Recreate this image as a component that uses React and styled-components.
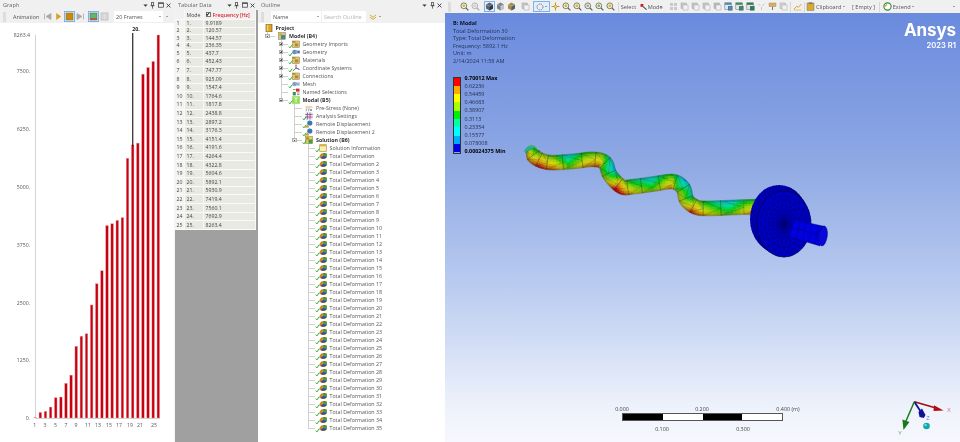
import React from "react";
import styled, { createGlobalStyle } from "styled-components";

const Global = createGlobalStyle`
  html, body { margin: 0; padding: 0; background: #f0f0f0; }
  * { box-sizing: border-box; }
`;
const FONT = `"Open Sans", "Noto Sans", "Liberation Sans", sans-serif`;

const Page = styled.div`
  width: 960px; height: 442px; overflow: hidden; filter: blur(0.28px);
  display: grid; grid-template-columns: 174px 84px 187px 515px;
  font-family: ${FONT}; font-size: 5.4px; color: #333; background: #f4f4f4;
`;
const Panel = styled.section`display: flex; flex-direction: column; min-width: 0; height: 442px; overflow: hidden;`;
const TitleBar = styled.div`
  height: 10px; flex: none; display: flex; align-items: center; gap: 2px;
  padding: 0 3px 0 ${p => p.$pl || 3}px; color: #666; font-size: 5.6px; background: #f0f0f0; white-space: nowrap;
`;
const Dots = styled.span`
  flex: 1; height: 3px; margin: 0 2px;
  background-image: radial-gradient(#c6c6c6 0.45px, transparent 0.55px); background-size: 2px 1.5px;
`;
const WinIcons = styled.span`display: flex; gap: 2.5px; align-items: center; color: #444;`;
const Toolbar = styled.div`
  height: 13px; flex: none; display: flex; align-items: center;
  background: #f0f0f0; white-space: nowrap; color: #555; font-size: ${p => p.$fs || 5.5}px;
  padding-left: ${p => p.$pad || 3}px; gap: ${p => p.$gap ?? 1.5}px;
`;
const Grip = styled.span`
  width: 3px; height: 10px; flex: none;
  background-image: radial-gradient(#bdbdbd 0.5px, transparent 0.6px); background-size: 1.6px 1.6px;
`;
const ToolBtn = styled.span`
  width: ${p => p.$w || 11}px; height: 11px; flex: none; display: inline-flex; align-items: center; justify-content: center;
  border: 0.7px solid ${p => (p.$active ? "#7fb2ea" : "transparent")};
  background: ${p => (p.$active ? "#e4eefa" : "transparent")};
`;
const Label = styled.span`flex: none; width: ${p => (p.$w ? p.$w + "px" : "auto")}; color: ${p => p.$c || "#555"}; text-align: ${p => p.$align || "left"};`;
const Select = styled.span`
  width: ${p => p.$w}px; height: 10.5px; flex: none; display: flex; align-items: center; justify-content: space-between;
  background: #fff; padding: 0 2.5px 0 2px; color: ${p => p.$c || "#555"}; margin-left: ${p => p.$ml || 0}px;
`;
const Sep = styled.span`width: 0.7px; height: 10px; background: #d6d6d6; flex: none; margin: 0 ${p => p.$m ?? 1}px;`;
const Spacer = styled.span`width: ${p => p.$w}px; flex: none;`;
const Caret = styled.span`
  width: 0; height: 0; flex: none; border-left: 1.6px solid transparent; border-right: 1.6px solid transparent;
  border-top: 1.8px solid #555; margin-left: 1px;
`;

/* ---------- Graph ---------- */
const ChartArea = styled.div`flex: 1; background: #fff; min-height: 0;`;
const freq = ["9.9189","120.57","144.57","236.35","437.7","452.43","747.77","925.09","1547.4","1764.6","1817.8","2438.8","2897.2","3176.3","4151.4","4191.6","4264.4","4322.8","5604.6","5892.1","5930.9","7419.4","7560.1","7692.9","8263.4"];
const yOf = v => 418 - (v / 8263.4) * 383;

function Chart() {
  const ticks = [["8263.4", 35], ["7500.", 71], ["6250.", 129], ["5000.", 187], ["3750.", 245], ["2500.", 303], ["1250.", 360], ["0.", 418]];
  const xl = [[1,34.7],[3,45],[5,55.5],[7,66],[9,76],[11,88],[13,98],[15,109],[17,119],[19,130],[21,140],[25,154]];
  return (
    <svg width="174" height="419" viewBox="0 23 174 419" style={{ display: "block" }} fontFamily={FONT} fontSize="5.2" fill="#555">
      <path d="M35.5 35V418.5H160" fill="none" stroke="#d4d4d4" />
      {ticks.map(([t, y]) => <text key={t} x="30" y={y + 2} textAnchor="end">{t}</text>)}
      {xl.map(([t, x]) => <text key={t} x={x} y="427" textAnchor="middle">{t}</text>)}
      {freq.map((f, i) => {
        const x = 35.2 + i * 5.13, y = yOf(parseFloat(f));
        return <rect key={f} x={x - 1.3} y={y} width="2.6" height={418 - y} fill="#c8000f" stroke="#eaa9ad" strokeWidth="0.4" />;
      })}
      <rect x="132.2" y="33" width="1.1" height="113" fill="#111" />
      <text x="136" y="31" textAnchor="middle" fontWeight="700" fill="#222">20.</text>
    </svg>
  );
}

/* ---------- Tabular ---------- */
const TableWrap = styled.div`flex: 1; background: #a0a0a0; margin-left: 1px; padding-right: 2px; min-height: 0; display:flex; flex-direction:column;`;
const Row = styled.div`
  display: grid; grid-template-columns: 10px 19px 1fr; height: ${p => p.$h}px; flex: none;
  line-height: ${p => p.$h}px; background: #e9e9e3; font-size: 5.2px; color: #444;
`;
const Cell = styled.span`
  display: flex; align-items: center; padding-left: 1.5px; overflow: hidden; white-space: nowrap; height: 100%;
  border-right: 0.6px solid #f8f8f6; border-bottom: 0.6px solid #fafaf8;
  background: ${p => p.$bg || "transparent"}; color: ${p => p.$c || "inherit"}; font-weight: ${p => p.$w || 400};
`;
const CheckBox = styled.span`
  width: 5px; height: 5px; flex: none; border: 0.6px solid #777; background: #fff; margin-right: 2px;
  display: inline-flex; align-items: center; justify-content: center; color: #111; font-size: 4.5px; line-height: 1;
`;

/* ---------- Outline ---------- */
const Tree = styled.div`flex: 1; background: #fff; padding-top: 0.7px; min-height: 0;`;
const TreeRow = styled.div`
  height: 8px; display: flex; align-items: center; padding-left: 3px; white-space: nowrap;
  color: ${p => (p.$bold ? "#333" : "#555")}; font-weight: ${p => (p.$bold ? 700 : 400)}; font-size: 5.3px;
`;
const Slot = styled.span`width: 13.5px; height: 8px; flex: none;`;
const Connector = styled.span`
  width: 13.5px; height: 8px; flex: none; position: relative; 
  &::before { content: ""; position: absolute; left: 6.4px; top: 0; width: 0.6px; background: #cfcfcf; height: ${p => (p.$end ? 4 : 8)}px; }
  &::after { content: ""; position: absolute; left: 6.8px; top: 4px; height: 0.6px; width: 7px; background: #cfcfcf; }
`;
const Expander = styled.span`
  position: absolute; z-index: 1; left: 4.3px; top: 1.9px; width: 4.6px; height: 4.6px; background: #e4e4e4; border: 0.5px solid #b0b0b0;
  &::before { content: ""; position: absolute; left: 0.6px; right: 0.6px; top: 1.5px; height: 0.6px; background: #555; }
  ${p => p.$plus && `&::after { content: ""; position: absolute; top: 0.6px; bottom: 0.6px; left: 1.5px; width: 0.6px; background: #555; }`}
`;
const IconSlot = styled.span`width: 13.5px; height: 8px; flex: none; position: relative; display: flex; align-items: center; justify-content: center; padding-left: 2px;`;
const CheckMark = styled.svg`position: absolute; left: 0; bottom: -0.8px; width: 5px; height: 4.5px;`;
const TreeText = styled.span`margin-left: 1px;`;

function TreeIcon({ kind }) {
  const P = {
    project: <><rect x="1" y="0" width="6" height="8" fill="#d9a52a" stroke="#6b4b10" strokeWidth=".6" /><rect x="1.8" y="0.8" width="1.4" height="6.4" fill="#f2d27a" /></>,
    model: <><rect x="0.5" y="0.5" width="7" height="7" fill="#d8c77a" stroke="#7f7a50" strokeWidth=".5" /><rect x="3" y="3" width="4" height="4" fill="#3f8aa0" /><circle cx="2.6" cy="2.5" r="1.3" fill="#e3a02a" /></>,
    folder: <><rect x="0.5" y="1" width="7" height="6.5" fill="#dcc886" stroke="#8a7a3a" strokeWidth=".5" /><rect x="2.8" y="3.4" width="3.5" height="3" fill="#b98a24" /><rect x="0.5" y="1" width="3" height="1.6" fill="#b98a24" /></>,
    geometry: <><ellipse cx="2.6" cy="4" rx="2.4" ry="2.2" fill="#5f8fc4" /><rect x="3.6" y="2.4" width="4.2" height="3.2" fill="#87a9d0" /><rect x="5.4" y="3.3" width="2.4" height="1.3" fill="#34608f" /></>,
    coords: <><path d="M4 4V.5" stroke="#cf2a2a" strokeWidth="1" fill="none" /><path d="M4 4L.8 7" stroke="#2d9a3a" strokeWidth="1" /><path d="M4 4l3.5 1.5" stroke="#2b55c8" strokeWidth="1" /></>,
    mesh: <><ellipse cx="2.6" cy="4" rx="2.4" ry="2.2" fill="#8aa9cc" /><rect x="3.6" y="2.4" width="4.2" height="3.2" fill="#a9c0da" /><path d="M1 3l3 2M4 3l3 2" stroke="#48688d" strokeWidth=".4" /></>,
    named: <><rect x="4" y="0.6" width="3.5" height="3" fill="#cc3030" /><rect x="0.8" y="4" width="3" height="3.4" fill="#3f8f4a" /><path d="M1 1.5h2.6M5 5h2.5M5 6.6h2.5" stroke="#666" strokeWidth=".7" /></>,
    modal: <><rect x="0.2" y="0.2" width="7.6" height="7.6" fill="#8edb5e" /><path d="M4 1.5v5M2 2h4" stroke="#f2f7c8" strokeWidth="1.1" /></>,
    prestress: <><path d="M.5 3h7" stroke="#d8a83a" strokeWidth=".9" /><path d="M1 7.3l1-3M3.5 7.3l.6-3" stroke="#55606a" strokeWidth=".6" /><path d="M5 5l2 2M7 5l-2 2" stroke="#3e5f9e" strokeWidth=".6" /></>,
    analysis: <><rect x="0.3" y="0.5" width="7.4" height="7" fill="#e7e4f2" /><path d="M.3 2.5h7.4M.3 5h7.4" stroke="#c44" strokeWidth=".8" /><path d="M2.4.5v7M5 .5v7" stroke="#5a50b8" strokeWidth=".8" /></>,
    remote: <><circle cx="4.8" cy="3" r="2.6" fill="#3b74b8" /><path d="M.6 7.2L4 4" stroke="#777" strokeWidth=".8" /><rect x="0.5" y="5.7" width="3.4" height="2" fill="#d9a52a" /></>,
    solution: <><rect x="0.5" y="0.5" width="7" height="7" fill="#d6cf6e" stroke="#8a7f35" strokeWidth=".5" /><rect x="3.5" y="3.5" width="4" height="4" fill="#4d9a3f" /><circle cx="2.5" cy="2.5" r="1.4" fill="#d1851c" /></>,
    info: <><rect x="0.7" y="0.7" width="6.6" height="6.6" fill="#fbf0b4" stroke="#9f8b3c" strokeWidth=".6" /><rect x="0.7" y="0.7" width="6.6" height="1.7" fill="#d9b43e" /></>,
    td: <><path d="M1 3.2C2 1 5 .6 7.6 1.6L7.8 5.4C6 7.4 2.4 7.4.4 5.6Z" fill="#d4841e" /><path d="M4 1.2C5.5.8 7 1 7.8 1.8L7.8 4.8 4.6 4Z" fill="#3f9f3f" /><path d="M1.5 5.4L4.6 4 7.8 4.8C6.5 7 3 7.4 1.5 5.4Z" fill="#2f4fb0" /></>,
  };
  return <svg width="8" height="8" viewBox="0 0 8 8" style={{ display: "block" }}>{P[kind]}</svg>;
}

const rows = [
  { t: "Project", d: 0, i: "project", bold: true },
  { t: "Model (B4)", d: 1, i: "model", bold: true, box: "minus", end: true, c: false },
  { t: "Geometry Imports", d: 2, i: "folder", box: "plus" },
  { t: "Geometry", d: 2, i: "geometry", box: "plus" },
  { t: "Materials", d: 2, i: "folder", box: "plus" },
  { t: "Coordinate Systems", d: 2, i: "coords", box: "plus" },
  { t: "Connections", d: 2, i: "folder", box: "plus" },
  { t: "Mesh", d: 2, i: "mesh" },
  { t: "Named Selections", d: 2, i: "named", c: false },
  { t: "Modal (B5)", d: 2, i: "modal", bold: true, box: "minus", end: true },
  { t: "Pre-Stress (None)", d: 3, i: "prestress", c: false },
  { t: "Analysis Settings", d: 3, i: "analysis" },
  { t: "Remote Displacement", d: 3, i: "remote" },
  { t: "Remote Displacement 2", d: 3, i: "remote" },
  { t: "Solution (B6)", d: 3, i: "solution", bold: true, box: "minus", end: true },
  { t: "Solution Information", d: 4, i: "info" },
  ...Array.from({ length: 35 }, (_, k) => ({ t: k ? `Total Deformation ${k + 1}` : "Total Deformation", d: 4, i: "td", end: k === 34 })),
];

/* ---------- Toolbar glyphs ---------- */
const Mag = ({ c = "#d8b23a", g }) => (
  <svg width="9" height="9" viewBox="0 0 9 9"><circle cx="3.8" cy="3.8" r="2.9" fill={g ? "#e9e9e9" : "#f5eec8"} stroke={g ? "#a8a8a8" : "#5d6a5d"} strokeWidth=".8" /><circle cx="3.8" cy="3.8" r="1.3" fill={g ? "#cfcfcf" : c} /><path d="M6 6l2.4 2.4" stroke={g ? "#a8a8a8" : "#55606a"} strokeWidth="1.1" /></svg>
);
const Cube = ({ c = "#5a6470", d = "#2f3640" }) => (
  <svg width="9" height="9" viewBox="0 0 9 9"><path d="M4.5 .6L8 2.4v4.2L4.5 8.4 1 6.6V2.4Z" fill={c} /><path d="M4.5 4.2L8 2.4v4.2L4.5 8.4Z" fill={d} /><path d="M1 2.4l3.5 1.8L8 2.4" stroke="#ddd" strokeWidth=".4" fill="none" /></svg>
);
const Sheets = ({ c = "#c9c9c9", b = "#a5a5a5" }) => (
  <svg width="9" height="9" viewBox="0 0 9 9"><rect x="1" y="1" width="5.5" height="5.5" fill={c} stroke={b} strokeWidth=".5" /><rect x="3" y="3" width="5" height="5" fill="#f2f2f2" stroke={b} strokeWidth=".5" /></svg>
);
const Pane = ({ c }) => (
  <svg width="9" height="9" viewBox="0 0 9 9"><rect x=".8" y=".8" width="6.5" height="6.5" fill="#dfe6ea" stroke="#60707a" strokeWidth=".5" /><rect x=".8" y=".8" width="6.5" height="2" fill={c} /><rect x="4.2" y="4.2" width="4" height="4" fill={c} stroke="#40505a" strokeWidth=".4" /></svg>
);
const WinBar = ({ three }) => (
  <WinIcons>
    <svg width="5" height="5" viewBox="0 0 5 5"><path d="M.4 1.4h4.2L2.5 3.8Z" fill="#333" /></svg>
    <svg width="5" height="7" viewBox="0 0 5 7"><path d="M1.2.5h2.6M1.5.5v3h2v-3M.5 3.7h4M2.5 3.7V6.6" stroke="#333" strokeWidth=".7" fill="none" /></svg>
    {!three && <svg width="6" height="6" viewBox="0 0 6 6"><rect x=".5" y=".8" width="5" height="4.4" fill="none" stroke="#333" strokeWidth=".7" /><path d="M.5 1.4h5" stroke="#333" strokeWidth=".8" /></svg>}
    <svg width="5" height="5" viewBox="0 0 5 5"><path d="M.6.6l3.8 3.8M4.4.6L.6 4.4" stroke="#333" strokeWidth=".9" /></svg>
  </WinIcons>
);

/* ---------- Viewport ---------- */
const Viewport = styled.section`display: flex; flex-direction: column; height: 442px;`;
const Canvas = styled.div`
  flex: 1; position: relative; overflow: hidden;
  background: linear-gradient(180deg, #6a8ade 0%, #8fa9e4 35%, #bccdf0 65%, #eef2fb 92%, #f6f8fd 100%);
`;
const Info = styled.div`position: absolute; left: 8px; top: 7px; color: #15233f; font-size: 5.5px; line-height: 7.55px; opacity: .88; white-space: nowrap;`;
const InfoTitle = styled.div`font-weight: 700; color: #000;`;
const Legend = styled.div`position: absolute; left: 7.5px; top: 62.5px; display: grid; grid-template-columns: 8px auto; column-gap: 4px; font-size: 5.4px; color: #1c2740;`;
const Swatches = styled.div`display: flex; flex-direction: column; height: 77px; border: 0.7px solid #333; margin-top: 1px;`;
const Swatch = styled.span`flex: 1; background: ${p => p.$c};`;
const LegendLabels = styled.div`display: flex; flex-direction: column; justify-content: space-between; height: 82px; margin-top: -2px; line-height: 8.2px; white-space: nowrap;`;
const LegendLabel = styled.span`font-weight: ${p => (p.$b ? 700 : 400)}; color: ${p => (p.$b ? "#000" : "#24304d")};`;
const Brand = styled.div`position: absolute; right: 4px; top: 8px; color: #fff; text-align: right; font-family: Inter, "Open Sans", sans-serif; font-weight: 700; display: flex; flex-direction: column; gap: 2px;`;
const BrandName = styled.div`font-size: 17px; line-height: 18px; letter-spacing: -0.1px;`;
const BrandVer = styled.div`font-size: 7.6px; line-height: 9px; font-weight: 600;`;
const Scene = styled.svg`position: absolute; inset: 0; display: block;`;
const ScaleBar = styled.div`
  position: absolute; left: 177px; top: 399.5px; width: 161px; height: 8px; display: flex; border: 0.8px solid #555; background: #fff;
`;
const ScaleSeg = styled.span`flex: 1; background: ${p => (p.$on ? "#000" : "#fff")};`;
const ScaleNum = styled.span`position: absolute; top: ${p => p.$t}px; left: ${p => p.$x}px; transform: translateX(-50%); font-size: 5.4px; color: #444; white-space: nowrap;`;

/* crank mesh */
const BANDS = [[0,0,230],[0,150,255],[0,255,255],[0,255,170],[0,240,0],[170,245,0],[255,255,0],[255,170,0],[255,0,0]];
const ramp = v => {
  const t = Math.max(0, Math.min(0.999, v)) * 8, i = Math.floor(t), f = t - i;
  return BANDS[i].map((c, k) => c + (BANDS[i + 1][k] - c) * f);
};
const Z = (x, y) => [510 + x / 3, 130 + y / 3];
const ctrl = [[62,60],[72,78],[95,92],[130,98],[200,93],[250,88],[285,98],[300,135],[335,170],[370,170],[430,162],[490,155],[520,175],[530,210],[560,232],[600,235],[680,232],[745,230]].map(p => Z(p[0], p[1]));
const spline = (() => {
  const out = [];
  for (let i = 0; i < ctrl.length - 1; i++) {
    const a = ctrl[Math.max(0, i - 1)], b = ctrl[i], c = ctrl[i + 1], d = ctrl[Math.min(ctrl.length - 1, i + 2)];
    for (let k = 0; k < 7; k++) {
      const t = k / 7, t2 = t * t, t3 = t2 * t;
      out.push([0, 1].map(j => 0.5 * (2 * b[j] + (c[j] - a[j]) * t + (2 * a[j] - 5 * b[j] + 4 * c[j] - d[j]) * t2 + (3 * b[j] - a[j] - 3 * c[j] + d[j]) * t3)));
    }
  }
  out.push(ctrl[ctrl.length - 1]);
  return out;
})();
const stops = [[40,.5],[90,.82],[130,.72],[170,.42],[220,.68],[270,.76],[292,.38],[325,.88],[370,.58],[420,.42],[480,.72],[510,.36],[550,.8],[600,.56],[650,.38],[700,.62],[745,.72]];
const base = zx => {
  for (let i = 0; i < stops.length - 1; i++) if (zx <= stops[i + 1][0]) {
    const [a, va] = stops[i], [b, vb] = stops[i + 1];
    return va + (vb - va) * Math.max(0, (zx - a) / (b - a));
  }
  return .6;
};
const frames = spline.map((p, i) => {
  const a = spline[Math.max(0, i - 1)], b = spline[Math.min(spline.length - 1, i + 1)];
  const dx = b[0] - a[0], dy = b[1] - a[1], l = Math.hypot(dx, dy) || 1;
  const r = i < 6 ? 4.2 + i * 0.5 : 7.4;
  return { p, n: [-dy / l, dx / l], r };
});
const at = (f, u) => [f.p[0] + f.n[0] * f.r * u, f.p[1] + f.n[1] * f.r * u];
const pt = a => `${a[0].toFixed(2)},${a[1].toFixed(2)}`;
const tube = (() => {
  const polys = [], US = [-1, -.72, -.4, -.1, .2, .5, .78, 1];
  for (let i = 0; i < frames.length - 1; i++) for (let j = 0; j < US.length - 1; j++) {
    const u = (US[j] + US[j + 1]) / 2, zx = (frames[i].p[0] - 510) * 3;
    const rgb = ramp(base(zx) + u * 0.2);
    const sh = 0.86 - 0.28 * Math.pow(Math.abs(u), 2.2);
    polys.push({ d: [at(frames[i], US[j]), at(frames[i + 1], US[j]), at(frames[i + 1], US[j + 1]), at(frames[i], US[j + 1])].map(pt).join(" "), f: `rgb(${rgb.map(c => Math.round(c * sh)).join(",")})` });
  }
  return polys;
})();
const tubeMesh = (() => {
  let d = "";
  for (let i = 0; i + 6 < frames.length; i += 6) {
    const a = frames[i], b = frames[i + 6];
    d += `M${pt(at(a, -1))}L${pt(at(a, 1))}M${pt(at(a, -1))}L${pt(at(b, .05))}L${pt(at(a, 1))}M${pt(at(b, -1))}L${pt(at(b, .05))}L${pt(at(b, 1))}`;
  }
  return d;
})();
const outlinePath = (u) => frames.map((f, i) => (i ? "L" : "M") + pt(at(f, u))).join("");
const discMesh = (cx, cy, rx, ry, rings, n) => {
  let d = "";
  const P = (r, a) => `${(cx + Math.cos(a) * rx * r).toFixed(1)} ${(cy + Math.sin(a) * ry * r).toFixed(1)}`;
  for (let r = 1; r <= rings; r++) {
    const R = r / rings, R2 = (r - 1) / rings;
    for (let k = 0; k < n; k++) {
      const a = (k + (r % 2) * .5) / n * 6.283, b = (k + 1 + (r % 2) * .5) / n * 6.283, m = (k + .5 + (r % 2) * .5) / n * 6.283;
      d += `M${P(R, a)}L${P(R, b)}L${P(R2, m)}Z`;
    }
  }
  return d;
};
const rimMesh = (() => {
  let d = "";
  for (let k = 0; k < 60; k++) {
    const a = k / 60 * 6.283, x = Math.cos(a), y = Math.sin(a);
    d += `M${(779 + 29 * x).toFixed(1)} ${(219 + 34 * y).toFixed(1)}L${(784 + 27 * x).toFixed(1)} ${(224 + 33 * y).toFixed(1)}`;
  }
  return d;
})();

function Scene3D() {
  return (
    <Scene width="515" height="429" viewBox="445 13 515 429">
      <circle cx={frames[0].p[0] + 1} cy={frames[0].p[1] + 1} r="6" fill="#4fae63" />
      <path d="M524 151a7 6 0 0 1 10-4l-1 5-7 2Z" fill="#22ad9c" />
      {tube.map((p, i) => <polygon key={i} points={p.d} fill={p.f} stroke={p.f} strokeWidth=".25" />)}
      <path d={tubeMesh} fill="none" stroke="#1c2a14" strokeWidth=".34" strokeOpacity=".6" />
      <path d={outlinePath(-1) + outlinePath(1)} fill="none" stroke="#26302a" strokeWidth=".4" strokeOpacity=".5" />
      <ellipse cx="779" cy="219" rx="29" ry="34" fill="#0000b8" />
      <path d={rimMesh} stroke="#000058" strokeWidth=".55" fill="none" />
      <ellipse cx="784" cy="224" rx="27" ry="33" fill="#0000cc" stroke="#000058" strokeWidth=".5" />
      <path d={discMesh(784, 224, 27, 33, 7, 22)} fill="none" stroke="#000060" strokeWidth=".42" />
      <path d="M795 220L825 226.5 820 246 790 237Z" fill="#0000e0" />
      <path d="M795 220L825 226.5M790 237L820 246M800 221l-3 17M806 222.5l-3 17.5M812 224l-3 18M818 225l-3 19M795 228l26 8" stroke="#000060" strokeWidth=".4" fill="none" />
      <ellipse cx="823" cy="236" rx="4.3" ry="10" transform="rotate(8 823 236)" fill="#0808d8" stroke="#000060" strokeWidth=".4" />
      {/* triad */}
      <path d="M914.3 401.7L936 408" stroke="#9c0f0f" strokeWidth="1.5" />
      <path d="M934 405.2L943.5 410.4 933.5 411Z" fill="#b50d0d" />
      <path d="M914.3 401.7L921 412" stroke="#10109a" strokeWidth="1.8" />
      <path d="M918.5 412l3.5-3.5 3.5 6.5-1.7 3-4.3-1Z" fill="#10109a" />
      <path d="M914.3 401.7L906 421" stroke="#1b7a1b" strokeWidth="1.5" />
      <path d="M902.4 419.6L909.4 422 903.5 430Z" fill="#177a17" />
      <circle cx="926.5" cy="426" r="3.3" fill="#10a7ad" />
      <circle cx="925.6" cy="425" r="1.2" fill="#62dfe0" />
      <text x="949" y="411.5" fontSize="6" fill="#e56a6a" textAnchor="middle" fontFamily={FONT}>X</text>
      <text x="928" y="420" fontSize="6" fill="#6a6aee" textAnchor="middle" fontFamily={FONT}>Z</text>
      <text x="900" y="434.5" fontSize="6" fill="#60b060" textAnchor="middle" fontFamily={FONT}>Y</text>
    </Scene>
  );
}

const legendColors = ["#ff0000","#ffaa00","#ffff00","#aaff00","#00f000","#00ffaa","#00ffff","#00aaff","#0000e6"];
const legendVals = [["0.70012 Max",1],["0.62236"],["0.54459"],["0.46683"],["0.38907"],["0.3113"],["0.23354"],["0.15577"],["0.078008"],["0.00024375 Min",1]];

export default function App() {
  return (
    <Page>
      <Global />
      <Panel>
        <TitleBar>Graph<Dots /><WinBar /></TitleBar>
        <Toolbar $gap={0}>
          <Grip /><Spacer $w={7} /><Label $w={28}>Animation</Label><Spacer $w={1} />
          <ToolBtn><svg width="9" height="9" viewBox="0 0 9 9"><path d="M1.5 1.5v6M8 1.5v6L3 4.5Z" stroke="#aaa" strokeWidth=".8" fill="#aaa" /></svg></ToolBtn>
          <ToolBtn><svg width="9" height="9" viewBox="0 0 9 9"><path d="M2.2 1l5 3.5-5 3.5Z" fill="#d9a21e" /></svg></ToolBtn>
          <ToolBtn $active><svg width="9" height="9" viewBox="0 0 9 9"><rect x="1" y="1" width="7" height="7" fill="#c68c12" stroke="#8a6510" strokeWidth=".5" /></svg></ToolBtn>
          <ToolBtn><svg width="9" height="9" viewBox="0 0 9 9"><path d="M7.5 1.5v6M1 1.5v6l5-3Z" stroke="#aaa" strokeWidth=".8" fill="#aaa" /></svg></ToolBtn>
          <Spacer $w={2} />
          <ToolBtn $active><svg width="9" height="9" viewBox="0 0 9 9"><rect x="1" y="1" width="7" height="7" fill="#5fb86a" stroke="#555" strokeWidth=".5" /><path d="M1 7h7" stroke="#d33" strokeWidth="1.3" /></svg></ToolBtn>
          <ToolBtn><svg width="9" height="9" viewBox="0 0 9 9"><rect x="1" y="1" width="7" height="7" fill="#e2e2e2" stroke="#aaa" strokeWidth=".6" /><path d="M3 1v7M6 1v7" stroke="#c4c4c4" strokeWidth=".6" /></svg></ToolBtn>
          <Select $w={49} $ml={4}>20 Frames<Caret /></Select>
          <Spacer $w={2} /><Caret />
        </Toolbar>
        <ChartArea><Chart /></ChartArea>
      </Panel>

      <Panel>
        <TitleBar $pl={4}>Tabular Data<Dots /><WinBar /></TitleBar>
        <TableWrap>
          <Row $h={10}>
            <Cell $bg="#f1f1f1" />
            <Cell $bg="#f1f1f1">Mode</Cell>
            <Cell $bg="#f1f1f1" $c="#d8232a" $w={600}><CheckBox>✔</CheckBox>Frequency [Hz]</Cell>
          </Row>
          {freq.map((f, i) => (
            <Row key={f} $h={i < 5 ? 7.6 : 8.6}>
              <Cell $bg="#f3f3f1">{i + 1}</Cell>
              <Cell>{i + 1}.</Cell>
              <Cell>{f}</Cell>
            </Row>
          ))}
        </TableWrap>
      </Panel>

      <Panel>
        <TitleBar>Outline<Dots /><WinBar three /></TitleBar>
        <Toolbar $gap={0}>
          <Grip /><Spacer $w={7} />
          <Select $w={50}>Name<Caret /></Select>
          <Spacer $w={1} />
          <Select $w={44} $c="#b5b5b5">Search Outline</Select>
          <Spacer $w={3} />
          <svg width="8" height="6" viewBox="0 0 8 6"><path d="M1 1l3 2.2L7 1M1 3.2l3 2.2 3-2.2" stroke="#d8a21e" strokeWidth=".9" fill="none" /></svg>
          <Spacer $w={1} /><Caret />
        </Toolbar>
        <Tree>
          {rows.map(r => (
            <TreeRow key={r.t} $bold={r.bold}>
              {Array.from({ length: Math.max(0, r.d - 1) }, (_, k) => <Slot key={k} />)}
              {r.d > 0 && <Connector $end={r.end}>{r.box && <Expander $plus={r.box === "plus"} />}</Connector>}
              <IconSlot>
                <TreeIcon kind={r.i} />
                {r.d > 0 && r.c !== false && <CheckMark viewBox="0 0 5 5"><path d="M.6 2.8l1.3 1.5L4.4.8" stroke="#13a313" strokeWidth="1" fill="none" /></CheckMark>}
              </IconSlot>
              <TreeText>{r.t}</TreeText>
            </TreeRow>
          ))}
        </Tree>
      </Panel>

      <Viewport>
        <Toolbar $pad={3} $gap={0} $fs={5.6}>
          <Grip /><Spacer $w={8} />
          <ToolBtn><Mag /></ToolBtn><ToolBtn><Mag g /></ToolBtn><Spacer $w={3} />
          <ToolBtn $active><Cube /></ToolBtn><ToolBtn><Cube c="#7a828c" d="#c2c6cb" /></ToolBtn><ToolBtn><Cube c="#a88a4a" d="#55606a" /></ToolBtn><Spacer $w={3} />
          <ToolBtn><Sheets /></ToolBtn><Spacer $w={2} />
          <ToolBtn $w={17} $active><svg width="8" height="8" viewBox="0 0 8 8"><circle cx="4" cy="4" r="3" fill="none" stroke="#555" strokeWidth=".7" strokeDasharray="1.4 .7" /></svg><Caret /></ToolBtn>
          <ToolBtn><svg width="9" height="9" viewBox="0 0 9 9"><path d="M4.5.5v8M.5 4.5h8" stroke="#c89b22" strokeWidth="1.1" /><circle cx="4.5" cy="4.5" r="1.4" fill="#f5e08a" stroke="#7a6a2a" strokeWidth=".4" /></svg></ToolBtn>
          <ToolBtn><Mag /></ToolBtn><ToolBtn><Mag /></ToolBtn><ToolBtn><Mag c="#9aa3ad" /></ToolBtn><ToolBtn><Mag c="#74b060" /></ToolBtn><ToolBtn><Mag /></ToolBtn>
          <Sep $m={2} />
          <Label $w={18}>Select</Label>
          <ToolBtn $w={9}><svg width="8" height="8" viewBox="0 0 8 8"><rect x=".6" y=".6" width="3.2" height="3.2" fill="#d01818" /><path d="M3.5 3.5L7.5 7" stroke="#444" strokeWidth="1.2" /></svg></ToolBtn>
          <Label $w={11}>Mode</Label><Caret />
          <Spacer $w={6} />
          <ToolBtn><svg width="9" height="9" viewBox="0 0 9 9"><path d="M1 1h3v3H1ZM5 1h3v3H5ZM1 5h3v3H1ZM5 5h3v3H5Z" fill="#c9c9c9" /></svg></ToolBtn>
          <ToolBtn><Sheets /></ToolBtn><ToolBtn><Sheets /></ToolBtn><ToolBtn><Sheets /></ToolBtn>
          <ToolBtn><Sheets c="#bbb" /></ToolBtn>
          <ToolBtn><Pane c="#4a8ab8" /></ToolBtn><ToolBtn><Pane c="#3d8a5a" /></ToolBtn><ToolBtn><Pane c="#2f7a50" /></ToolBtn>
          <ToolBtn><svg width="9" height="9" viewBox="0 0 9 9"><path d="M1.5 2l2 2M7.5 1.5l-2 2.5M4.5 5v3" stroke="#c4c4c4" strokeWidth="1" /></svg></ToolBtn>
          <ToolBtn><svg width="9" height="9" viewBox="0 0 9 9"><rect x="1" y="1" width="7" height="3.6" fill="#d8b05a" stroke="#888" strokeWidth=".4" /><path d="M4.5 4.6V8" stroke="#777" strokeWidth="1" /></svg></ToolBtn>
          <ToolBtn><Sheets c="#d4d4d4" /></ToolBtn>
          <Sep $m={1.5} />
          <ToolBtn><svg width="9" height="9" viewBox="0 0 9 9"><path d="M.8 7.2l3-3 1.6 1.2L8.4 2" stroke="#d8a21e" strokeWidth=".9" fill="none" /><path d="M.8 8h7.6" stroke="#c4a24a" strokeWidth=".6" /></svg></ToolBtn>
          <Sep $m={.5} />
          <ToolBtn><svg width="9" height="9" viewBox="0 0 9 9"><rect x="1" y="1" width="7" height="7.5" fill="#d8ab2e" stroke="#777" strokeWidth=".5" /><rect x="2.6" y=".4" width="3.8" height="1.6" fill="#777" /></svg></ToolBtn>
          <Label $w={26}>Clipboard</Label><Caret />
          <Spacer $w={7} />
          <Label $w={25}>[ Empty ]</Label>
          <Sep $m={2} />
          <ToolBtn><svg width="9" height="9" viewBox="0 0 9 9"><circle cx="4.5" cy="4.5" r="3.6" fill="#fff" stroke="#2d8a3a" strokeWidth="1.1" /><path d="M1 5l3-2.6" stroke="#d8a21e" strokeWidth="1.3" /></svg></ToolBtn>
          <Label $w={18}>Extend</Label><Caret />
          <Spacer $w={38} /><Caret />
        </Toolbar>
        <Canvas>
          <Scene3D />
          <Info>
            <InfoTitle>B: Modal</InfoTitle>
            <div>Total Deformation 30</div>
            <div>Type: Total Deformation</div>
            <div>Frequency: 5892.1 Hz</div>
            <div>Unit: m</div>
            <div>2/14/2024 11:58 AM</div>
          </Info>
          <Legend>
            <Swatches>{legendColors.map(c => <Swatch key={c} $c={c} />)}</Swatches>
            <LegendLabels>{legendVals.map(([v, b]) => <LegendLabel key={v} $b={b}>{v}</LegendLabel>)}</LegendLabels>
          </Legend>
          <Brand><BrandName>Ansys</BrandName><BrandVer>2023 R1</BrandVer></Brand>
          <ScaleNum $x={177} $t={392}>0.000</ScaleNum>
          <ScaleNum $x={257} $t={392}>0.200</ScaleNum>
          <ScaleNum $x={343} $t={392}>0.400 (m)</ScaleNum>
          <ScaleNum $x={217} $t={412}>0.100</ScaleNum>
          <ScaleNum $x={298} $t={412}>0.300</ScaleNum>
          <ScaleBar><ScaleSeg $on /><ScaleSeg /><ScaleSeg $on /><ScaleSeg /></ScaleBar>
        </Canvas>
      </Viewport>
    </Page>
  );
}
